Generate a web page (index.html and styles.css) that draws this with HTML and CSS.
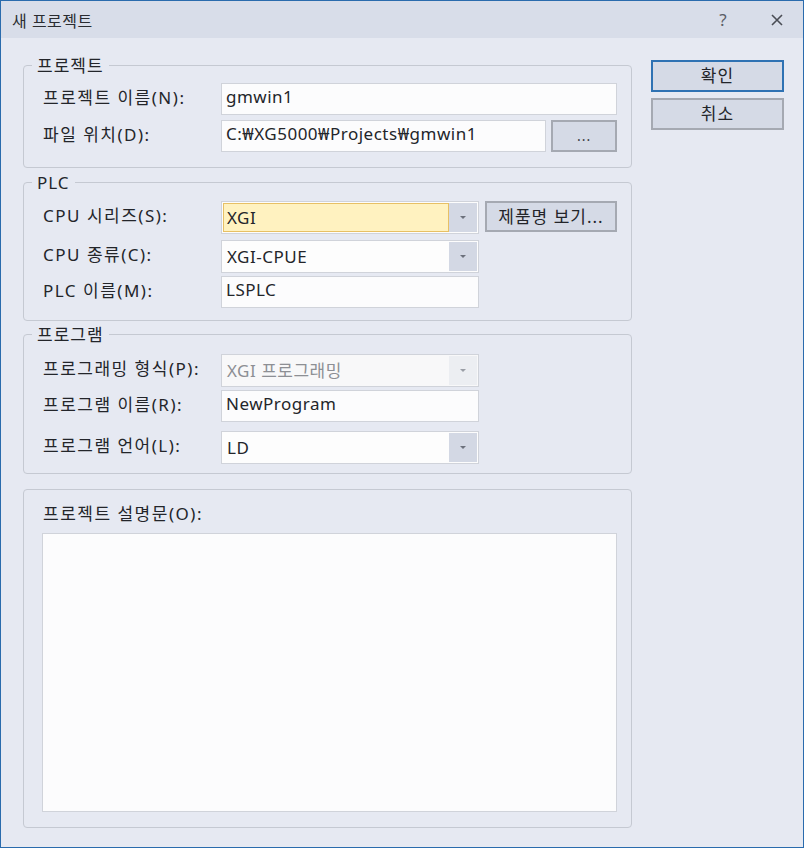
FILE: index.html
```html
<!DOCTYPE html>
<html lang="ko">
<head>
<meta charset="utf-8">
<title>새 프로젝트</title>
<link rel="stylesheet" href="styles.css">
</head>
<body>
<div class="window">
  <div class="titlebar">
    <span class="title">새 프로젝트</span>
    <span class="help">?</span>
    <span class="close"><svg width="12" height="12" viewBox="0 0 12 12"><path d="M1 1 L11 11 M11 1 L1 11" stroke="#4a4d55" stroke-width="1.6" fill="none"/></svg></span>
  </div>
  <div class="content">
    <div class="left">
      <fieldset class="group g1">
        <legend>프로젝트</legend>
        <div class="row r32">
          <span class="label">프로젝트 이름(N):</span>
          <div class="input wide">gmwin1</div>
        </div>
        <div class="row r32 mt5">
          <span class="label">파일 위치(D):</span>
          <div class="input path">C:₩XG5000₩Projects₩gmwin1</div>
          <div class="btn dots">...</div>
        </div>
      </fieldset>

      <fieldset class="group g2">
        <legend>PLC</legend>
        <div class="row r33">
          <span class="label">CPU 시리즈(S):</span>
          <div class="combo focus"><div class="value">XGI</div><div class="dd"><span class="tri"></span></div></div>
          <div class="btn product">제품명 보기...</div>
        </div>
        <div class="row r33 mt6">
          <span class="label">CPU 종류(C):</span>
          <div class="combo"><div class="value">XGI-CPUE</div><div class="dd"><span class="tri"></span></div></div>
        </div>
        <div class="row r32 mt3">
          <span class="label">PLC 이름(M):</span>
          <div class="input mid">LSPLC</div>
        </div>
      </fieldset>

      <fieldset class="group g3">
        <legend>프로그램</legend>
        <div class="row r33">
          <span class="label">프로그래밍 형식(P):</span>
          <div class="combo disabled"><div class="value">XGI 프로그래밍</div><div class="dd"><span class="tri"></span></div></div>
        </div>
        <div class="row r32 mt3">
          <span class="label">프로그램 이름(R):</span>
          <div class="input mid">NewProgram</div>
        </div>
        <div class="row r33 mt9">
          <span class="label">프로그램 언어(L):</span>
          <div class="combo"><div class="value">LD</div><div class="dd"><span class="tri"></span></div></div>
        </div>
      </fieldset>

      <div class="group g4">
        <div class="desc-label">프로젝트 설명문(O):</div>
        <div class="textarea"></div>
      </div>
    </div>
    <div class="right">
      <div class="btn action default">확인</div>
      <div class="btn action cancel">취소</div>
    </div>
  </div>
</div>
</body>
</html>
```

FILE: styles.css
```css
* { box-sizing: border-box; }
html, body { margin: 0; padding: 0; }
body {
  font-family: "Noto Sans", "Noto Sans CJK KR", sans-serif;
  color: #23252a;
  background: #e6e9f2;
}
.window {
  width: 804px;
  height: 848px;
  border: 1px solid #2a6bad;
  background: #e6e9f2;
  display: flex;
  flex-direction: column;
}
.titlebar {
  height: 37px;
  flex: none;
  background: #d8dde9;
  display: flex;
  align-items: center;
  padding-left: 11px;
}
.title {
  font-size: 16px;
  letter-spacing: 0.5px;
  color: #2a2c31;
  flex: 1;
}
.help {
  font-size: 17px;
  color: #5b5e66;
  width: 20px;
  margin-right: 38px;
  text-align: center;
}
.close {
  width: 12px;
  height: 12px;
  margin-right: 20px;
  display: flex;
}
.content {
  display: flex;
  padding-left: 22px;
}
.left {
  width: 609px;
  flex: none;
}
.right {
  width: 133px;
  margin-left: 19px;
  padding-top: 22px;
  display: flex;
  flex-direction: column;
  gap: 6px;
}
.group {
  margin: 0;
  border: 1px solid #c5c9d2;
  border-radius: 4px;
  padding: 0 14px 0 8px;
  min-width: 0;
}
legend {
  font-size: 17px;
  line-height: 21px;
  letter-spacing: 1px;
  padding: 0 5px;
  color: #23252a;
}
.g1 { margin-top: 17px; padding-top: 7px; padding-bottom: 15px; }
.g2 { margin-top: 4px; padding-top: 8px; padding-bottom: 12px; }
.g3 { margin-top: 3px; padding-top: 9px; padding-bottom: 9px; }
.g4 {
  margin-top: 15px;
  padding: 13px 14px 15px 18px;
}
.row {
  display: flex;
  align-items: center;
  padding-left: 11px;
}
.r32 { height: 32px; }
.r33 { height: 33px; }
.mt3 { margin-top: 3px; }
.mt5 { margin-top: 5px; }
.mt6 { margin-top: 6px; }
.mt9 { margin-top: 9px; }
.label {
  width: 178px;
  flex: none;
  font-size: 17px;
  letter-spacing: 1.5px;
  line-height: 21px;
  padding-bottom: 4px;
  white-space: nowrap;
}
.input {
  height: 100%;
  background: #fcfcfd;
  border: 1px solid #d0d3da;
  font-size: 17px;
  letter-spacing: 0.5px;
  line-height: 26px;
  padding-left: 4px;
  white-space: nowrap;
  overflow: hidden;
}
.input.wide { width: 396px; }
.input.path { width: 326px; }
.input.mid { width: 258px; }
.combo {
  width: 258px;
  height: 100%;
  border: 1px solid #d0d3da;
  background: #fdfdfd;
  padding: 1px;
  display: flex;
}
.combo .value {
  flex: 1;
  font-size: 17px;
  letter-spacing: 0.5px;
  line-height: 28px;
  padding-left: 3px;
  border: 1px solid transparent;
  white-space: nowrap;
}
.combo .dd {
  width: 28px;
  background: #d3d8e4;
  display: flex;
  align-items: center;
  justify-content: center;
}
.tri {
  width: 0;
  height: 0;
  border-left: 3px solid transparent;
  border-right: 3px solid transparent;
  border-top: 3px solid #6c717c;
}
.combo.focus .value {
  background: #fff2c0;
  border-color: #e7c065;
}
.combo.disabled { background: #f8f8f9; }
.combo.disabled .value { color: #8d8f94; }
.combo.disabled .dd { background: #eceef2; }
.combo.disabled .tri { border-top-color: #9a9ea6; }
.btn {
  background: #d5dae6;
  border: 2px solid #a5a9b2;
  display: flex;
  align-items: center;
  justify-content: center;
  font-size: 17px;
  letter-spacing: 0.5px;
  color: #23252a;
}
.btn.dots {
  width: 66px;
  height: 32px;
  margin-left: 5px;
  font-size: 14px;
  letter-spacing: 1px;
  padding-bottom: 2px;
  color: #3b3d42;
}
.btn.product {
  width: 132px;
  height: 31px;
  margin-left: 6px;
  align-self: flex-start;
  letter-spacing: 1px;
  padding-bottom: 3px;
}
.btn.action {
  height: 32px;
  letter-spacing: 1px;
  padding-bottom: 3px;
}
.btn.default { border-color: #2f72b3; }
.desc-label {
  font-size: 17px;
  letter-spacing: 1.5px;
  line-height: 21px;
  padding-left: 1px;
  margin-bottom: 9px;
}
.textarea {
  height: 279px;
  background: #fcfcfd;
  border: 1px solid #d0d3da;
}
```
